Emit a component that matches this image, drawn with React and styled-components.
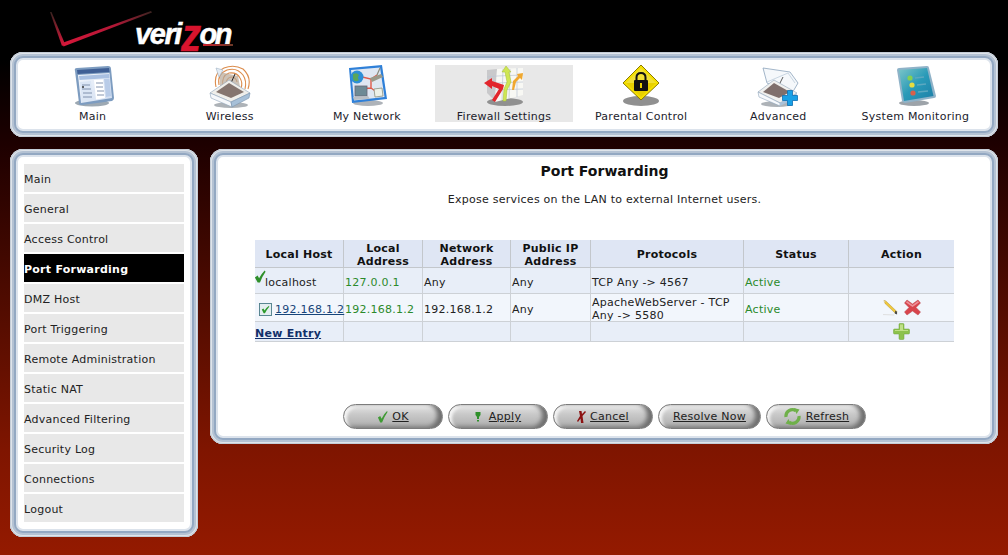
import React from "react";
import styled, { createGlobalStyle } from "styled-components";

const GlobalStyle = createGlobalStyle`
  html, body {
    margin: 0;
    padding: 0;
    height: 555px;
    overflow: hidden;
  }
  body {
    font-family: "DejaVu Sans", Verdana, sans-serif;
    font-size: 11px;
    letter-spacing: 0.25px;
    color: #222;
    background: linear-gradient(to bottom, #000 0px, #000 60px, #1e0000 145px, #5c0e00 340px, #7f1500 450px, #941a00 555px);
  }
`;

const Page = styled.div`
  width: 1008px;
  height: 555px;
  padding: 0 10px;
  box-sizing: border-box;
`;

const Header = styled.div`
  height: 52px;
  position: relative;
`;

const Panel = styled.div`
  background: #fff;
  border-radius: 13px;
  box-sizing: border-box;
  box-shadow: inset 0 0 0 1px #c4ccd6, inset 0 0 0 2px #dfe4ea, inset 0 0 0 4px #b4c2d3,
    inset 0 0 0 6px #93a8c2, inset 0 0 0 8px #dce3ec;
`;

const TopPanel = styled(Panel)`
  height: 85px;
  padding: 13px 14px 0 14px;
  display: flex;
  align-items: flex-start;
`;

const NavItem = styled.div`
  flex: 1;
  height: 57px;
  display: flex;
  flex-direction: column;
  align-items: center;
  background: ${(p) => (p.$active ? "#e8e8e8" : "transparent")};
`;

const NavIcon = styled.svg`
  width: 46px;
  height: 44px;
  display: block;
  flex: none;
`;

const NavLabel = styled.span`
  margin-top: 1px;
  line-height: 14px;
  color: #1c1c2c;
  white-space: nowrap;
`;

const Columns = styled.div`
  display: flex;
  align-items: flex-start;
  gap: 12px;
  margin-top: 12px;
`;

const SidePanel = styled(Panel)`
  width: 188px;
  height: 388px;
  padding: 15px 14px;
  flex: none;
`;

const MenuItem = styled.div`
  height: 28px;
  margin-bottom: 2px;
  line-height: 32px;
  white-space: nowrap;
  background: ${(p) => (p.$active ? "#000" : "#e8e8e8")};
  color: ${(p) => (p.$active ? "#fff" : "#222")};
  font-weight: ${(p) => (p.$active ? "bold" : "normal")};
`;

const MainPanel = styled(Panel)`
  flex: 1;
  height: 295px;
  padding: 14px 44px 0 45px;
  display: flex;
  flex-direction: column;
  align-items: center;
`;

const Title = styled.h1`
  margin: 0;
  font-size: 14px;
  line-height: 17px;
  font-weight: bold;
  letter-spacing: 0;
  color: #111;
`;

const Subtitle = styled.p`
  margin: 13px 0 0;
  line-height: 14px;
  color: #222;
`;

const Table = styled.table`
  width: 699px;
  margin-top: 33px;
  border-collapse: separate;
  border-spacing: 0;
  table-layout: fixed;
`;

const Th = styled.th`
  height: 28px;
  padding: ${(p) => (p.$single ? 8 : 2)}px 2px 0;
  box-sizing: border-box;
  vertical-align: top;
  background: #dfe6f4;
  border-right: 1px solid #c3c7cc;
  border-bottom: 1px solid #c3c7cc;
  font-size: 11px;
  line-height: 13px;
  font-weight: bold;
  color: #111;
  text-align: center;
  &:last-child {
    border-right: 0;
  }
`;

const HeadLines = styled.div`
  height: 24px;
`;

const Td = styled.td`
  height: ${(p) => p.$h}px;
  padding: ${(p) => p.$pt || 0}px 1px 0;
  box-sizing: border-box;
  vertical-align: top;
  background: ${(p) => (p.$light ? "#f2f6fc" : "#e8eef8")};
  border-right: 1px solid #cdd1d6;
  border-bottom: 1px solid #cdd1d6;
  line-height: 12px;
  color: ${(p) => (p.$green ? "#2b8a2b" : "#222")};
  text-align: left;
  white-space: nowrap;
  &:first-child {
    padding-left: 0;
  }
  &:last-child {
    border-right: 0;
  }
`;

const TwoLines = styled.div`
  height: 25px;
  line-height: 13px;
`;

const HostCell = styled.div`
  display: flex;
  align-items: center;
  gap: 3px;
  padding-left: 4px;
  svg {
    flex: none;
  }
`;

const TickHost = styled.div`
  position: relative;
  padding-left: 10px;
`;

const TickOver = styled.svg`
  position: absolute;
  left: -1px;
  top: -7px;
  width: 12px;
  height: 13px;
`;

const HostLink = styled.a`
  color: #17457a;
  text-decoration: underline;
`;

const NewEntry = styled.a`
  color: #12306a;
  font-weight: bold;
  text-decoration: underline;
`;

const ActionIcons = styled.div`
  display: flex;
  justify-content: center;
  gap: 6px;
  align-items: center;
`;

const PlusWrap = styled.div`
  display: flex;
  justify-content: center;
`;

const Buttons = styled.div`
  display: flex;
  gap: 5px;
  margin-top: 62px;
`;

const Button = styled.div`
  width: ${(p) => p.$w || 100}px;
  height: 25px;
  box-sizing: border-box;
  border-radius: 13px;
  border: 1px solid #7c7c7c;
  display: flex;
  align-items: center;
  justify-content: center;
  gap: ${(p) => p.$gap || 4}px;
  background: linear-gradient(to bottom, #e6e6e6 0%, #c9c9c9 40%, #b8b8b8 75%, #a8a8a8 100%);
  box-shadow: inset -5px -1px 4px #707070, inset 3px 2px 3px #f4f4f4;
  color: #222;
  text-decoration: underline;
`;

const Logo = styled.div`
  position: absolute;
  left: 38px;
  top: 8px;
  width: 190px;
  height: 40px;
`;

const LogoCheck = styled.svg`
  position: absolute;
  left: 0;
  top: 0;
  width: 120px;
  height: 40px;
`;

const LogoWord = styled.span`
  position: absolute;
  left: 87px;
  top: 10px;
  font-family: "Liberation Sans", Arial, sans-serif;
  font-size: 29px;
  line-height: 32px;
  font-weight: bold;
  font-style: italic;
  letter-spacing: -1.4px;
  white-space: nowrap;
  color: #fff;
  -webkit-text-stroke: 0.5px #fff;
`;

const LogoZ = styled.span`
  display: inline-block;
  font-size: 40px;
  line-height: 0;
  vertical-align: -5px;
  transform: scaleY(1.14);
  transform-origin: bottom;
  color: #d8142e;
  -webkit-text-stroke: 0.5px #d8142e;
`;

const LogoEnd = styled.span`
  letter-spacing: -2.6px;
`;

const LogoTail = styled.div`
  position: absolute;
  left: 155px;
  top: 36px;
  width: 30px;
  height: 2px;
  background: linear-gradient(to right, #c8202c, #6a3a28);
`;

const MainIcon = () => (
  <NavIcon viewBox="0 0 46 44">
    <defs>
      <linearGradient id="mainScreen" x1="0" y1="0" x2="1" y2="1">
        <stop offset="0" stopColor="#f4f7fc" />
        <stop offset="1" stopColor="#cfdcf0" />
      </linearGradient>
    </defs>
    <ellipse cx="22" cy="38" rx="17" ry="3.5" fill="#5c6f80" opacity="0.6" />
    <path d="M5 6 Q4 3 7 3 L38 1 Q41 1 41 4 L44 33 Q44 35 42 36 L12 40 Q9 40 9 38 Z" fill="#7d9cc0" />
    <path d="M7 5 L39 3 L39.5 7 L7.5 9 Z" fill="#3f5f95" />
    <path d="M8 10 L39.5 8 L42 33 L11 38 Z" fill="url(#mainScreen)" />
    <path d="M9 11 L39 9 L39.5 13 L9.5 15 Z" fill="#a9c0e2" />
    <path d="M10 17 L21 16 L23 35 L12 37 Z" fill="#dbe6f5" />
    <path d="M24 15 L33 14.5 L35 33 L26 34.5 Z" fill="#fff" />
    <path d="M34 14 L39.5 13.5 L41 31 L36 32 Z" fill="#b9cce8" />
    <path d="M12 20 h8 M12 24 h9 M13 28 h9 M13 32 h9 M26 18 h7 M26 22 h7 M27 26 h7 M27 30 h7" stroke="#7688a6" strokeWidth="0.9" />
    <circle cx="13" cy="22" r="1" fill="#333" />
  </NavIcon>
);

const WirelessIcon = () => (
  <NavIcon viewBox="0 0 46 44">
    <ellipse cx="24" cy="40" rx="17" ry="3" fill="#5b6670" opacity="0.5" />
    <g fill="none" stroke="#dc8c4c" strokeWidth="1.1">
      <path d="M9 22 Q6 8 17 3 Q27 -1 36 4 Q45 12 41 24" />
      <path d="M12 20 Q10 9 20 5 Q30 2 36 10 Q40 16 38 24" />
      <path d="M16 21 Q14 11 22 8 Q30 7 33 13 Q36 18 34 23" />
      <path d="M19 20 Q19 13 24 12 Q29 12 30 17" />
    </g>
    <path d="M13 7 L31 11 L34 27 L13 24 Z" fill="#b7a898" opacity="0.7" />
    <path d="M9 3 L16 5 L12 12 Z" fill="#e4ecf4" stroke="#9fb2c4" strokeWidth="0.6" />
    <path d="M24 18 L28 9" stroke="#222" strokeWidth="1" />
    <path d="M3 28 L22 15 L43 28 L24 37 Z" fill="#efeeea" stroke="#8ea5bb" strokeWidth="0.6" />
    <path d="M9 27 L22 18 L37 27 L24 33 Z" fill="#85756f" />
    <path d="M3 28 L24 37 L25 42 L4 33 Z" fill="#f6f8fb" stroke="#8ea5bb" strokeWidth="0.6" />
    <path d="M24 37 L43 28 L42 33 L25 42 Z" fill="#a7c0d8" stroke="#7b94ad" strokeWidth="0.6" />
  </NavIcon>
);

const NetworkIcon = () => (
  <NavIcon viewBox="0 0 46 44">
    <ellipse cx="24" cy="38" rx="15" ry="3" fill="#5d6873" opacity="0.5" />
    <path d="M5 3 L38 0 L43 34 L8 38 Z" fill="#2f80d8" />
    <path d="M7 5 L36 2.5 L40.5 32 L10 35.5 Z" fill="#dfe7f2" />
    <path d="M14 11 L27 14 L27 23 L14 24 L14 30 M27 14 L33 10 M27 23 L34 28" fill="none" stroke="#e05a4a" strokeWidth="1.4" />
    <circle cx="13" cy="12" r="6.5" fill="#2d8fd6" />
    <path d="M9 9 Q13 7 15 10 Q13 13 15 15 Q11 18 9 14 Z" fill="#5aa65a" />
    <path d="M26 13 L37 9 L39 12 L28 17 Z" fill="#9a9a8a" />
    <path d="M33 10 L36 3" stroke="#8a8a7a" strokeWidth="1.2" />
    <rect x="11" y="21" width="12" height="10" fill="#6d8a95" stroke="#667" strokeWidth="0.8" />
    <path d="M9 32 L24 31 L26 34 L10 35 Z" fill="#b9bfc4" />
    <path d="M30 24 L38 23 L39 31 L31 32 Z" fill="#eef1e8" stroke="#8a9080" strokeWidth="0.8" />
  </NavIcon>
);

const FirewallIcon = () => (
  <NavIcon viewBox="0 0 46 44">
    <ellipse cx="24" cy="37" rx="18" ry="4" fill="#6b6b6b" opacity="0.7" />
    <path d="M6 5 L16 4 L14 36 L6 28 Z" fill="#c9c9cb" />
    <path d="M16 4 L42 3 L42 30 L14 37 Z" fill="#f8f8f4" />
    <path d="M22 4 L21 35 M29 4 L28 34 M36 3 L36 32 M16 11 L42 10 M15 18 L42 17 M15 25 L42 24 M6 12 L16 11 M6 19 L15 18" stroke="#bcc5d4" strokeWidth="0.7" />
    <path d="M25 1 L30 7 L28 7 L30 17 L26 25 L25 36 L22 36 L23 24 L26 17 L24 7 L21 7 Z" fill="#cfe654" stroke="#a2bc34" strokeWidth="0.5" />
    <path d="M42 8 L41 15 L39 13 L35 17 L33 25 L31 25 L32 16 L37 11 L36 9 Z" fill="#f0a830" />
    <path d="M3 18 L11 13 L11 16 L23 20 L22 24 L14 37 L11 35 L18 24 L11 21 L11 24 Z" fill="#e2262c" />
  </NavIcon>
);

const ParentalIcon = () => (
  <NavIcon viewBox="0 0 46 44">
    <ellipse cx="23" cy="36" rx="18" ry="5" fill="#555" opacity="0.65" />
    <path d="M23 0 L41 18 L23 35 L5 18 Z" fill="#f5e000" stroke="#8a7a00" strokeWidth="1" strokeLinejoin="round" />
    <path d="M23 3 L38 18 L23 32 L8 18 Z" fill="#e8d000" />
    <path d="M23 3 L38 18 L8 18 Z" fill="#faf06a" opacity="0.5" />
    <path d="M18.5 16 L18.5 12.5 Q18.5 8 23 8 Q27.5 8 27.5 12.5 L27.5 16" fill="none" stroke="#111" strokeWidth="2" />
    <rect x="16" y="15" width="14" height="11" rx="1" fill="#111" />
    <rect x="22" y="18" width="2" height="5" fill="#e8d000" />
  </NavIcon>
);

const AdvancedIcon = () => (
  <NavIcon viewBox="0 0 46 44">
    <ellipse cx="22" cy="39" rx="16" ry="3" fill="#5b6670" opacity="0.5" />
    <path d="M8 3 L35 7 L43 18 L36 30 L12 18 Z" fill="#f5f8fb" stroke="#8ba3bb" strokeWidth="0.8" />
    <path d="M12 17 L33 8 L40 18" fill="none" stroke="#c9d6e2" strokeWidth="1" />
    <path d="M24 20 L28 12" stroke="#333" strokeWidth="0.8" />
    <path d="M3 27 L19 15 L42 28 L25 38 Z" fill="#f0f0ee" stroke="#8ea5bb" strokeWidth="0.6" />
    <path d="M8 27 L19 18 L35 27 L24 33 Z" fill="#7f6f6c" />
    <path d="M3 27 L25 38 L25 41 L4 32 Z" fill="#f7f9fc" stroke="#8ea5bb" strokeWidth="0.6" />
    <path d="M25 38 L42 28 L41 33 L25 41 Z" fill="#a9c2da" />
    <path d="M32.5 25.5 h5 v5 h5 v5 h-5 v5 h-5 v-5 h-5 v-5 h5 Z" fill="#18a0e6" stroke="#0c70b4" strokeWidth="0.8" />
  </NavIcon>
);

const MonitorIcon = () => (
  <NavIcon viewBox="0 0 46 44">
    <defs>
      <linearGradient id="monitorScreen" x1="0" y1="0" x2="1" y2="1">
        <stop offset="0" stopColor="#7cc6c8" />
        <stop offset="0.5" stopColor="#2a9ab8" />
        <stop offset="1" stopColor="#1c7fa8" />
      </linearGradient>
    </defs>
    <ellipse cx="22" cy="38" rx="15" ry="3" fill="#5b6670" opacity="0.6" />
    <path d="M5 5 Q5 3 7 3 L35 1 Q37 1 37 3 L44 31 Q44 33 42 33 L13 38 Q11 38 10 36 Z" fill="#8fb2c8" />
    <path d="M7 5 L35 3 L41.5 31 L12 36 Z" fill="url(#monitorScreen)" />
    <circle cx="18" cy="13" r="2.6" fill="#86d050" />
    <circle cx="20" cy="20" r="2.6" fill="#e8dc40" />
    <circle cx="21" cy="28" r="2.6" fill="#d8604a" />
    <path d="M23 13 L32 12 M25 20 L34 19 M26 27 L36 26" stroke="#5ca8c0" strokeWidth="1.4" />
  </NavIcon>
);

const Check = ({ w = 11, h = 13, color = "#2f9a2a" }) => (
  <svg width={w} height={h} viewBox="0 0 12 14">
    <path d="M1 8 L3.5 6.5 L5 9.5 Q7.5 4 11 1 L11.5 2 Q8 7 5.5 13.5 L3.5 13.5 Z" fill={color} />
  </svg>
);

const CheckBoxIcon = () => (
  <svg width="13" height="13" viewBox="0 0 14 14">
    <rect x="0.5" y="0.5" width="13" height="13" fill="#e4eef0" stroke="#4f7f8a" />
    <path d="M3 7 L4.8 5.8 L6 8 Q8 5 10.8 3 L11 4 Q8.5 7 6.4 11 L5 11 Z" fill="#2c9a2c" />
  </svg>
);

const PencilIcon = () => (
  <svg width="15" height="17" viewBox="0 0 16 17">
    <path d="M1 1 L3 1.5 L15 13 L13.5 15 L2 4 Z" fill="#f0c83c" stroke="#b09028" strokeWidth="0.5" />
    <path d="M13 12 L15 13 L15 16 L12.5 15 Z" fill="#4a4a4a" />
    <path d="M0 16 L12 16.5" stroke="#dddddd" strokeWidth="1" />
    <path d="M1 1 L2.5 2 L2 4 Z" fill="#e8dcc4" />
  </svg>
);

const CrossIcon = () => (
  <svg width="17" height="17" viewBox="0 0 17 17">
    <path d="M3 1 L8.5 5 L14 1 L16.5 4 L12 8.5 L16.5 13 L14 16 L8.5 12 L3 16 L0.5 13 L5 8.5 L0.5 4 Z" fill="#d8444c" stroke="#b84a50" strokeWidth="0.5" strokeLinejoin="round" />
    <path d="M3 2 L8.5 6 L14 2 L15 3.5 L8.5 8 L2 3.5 Z" fill="#ee9098" />
  </svg>
);

const PlusIcon = () => (
  <svg width="17" height="17" viewBox="0 0 17 17">
    <path d="M6 1 Q6 0.5 7 0.5 L10 0.5 Q11 0.5 11 1.5 L11 6 L15.5 6 Q16.5 6 16.5 7 L16.5 10 Q16.5 11 15.5 11 L11 11 L11 15.5 Q11 16.5 10 16.5 L7 16.5 Q6 16.5 6 15.5 L6 11 L1.5 11 Q0.5 11 0.5 10 L0.5 7 Q0.5 6 1.5 6 L6 6 Z" fill="#8cc24c" stroke="#6fa238" strokeWidth="0.5" />
    <path d="M7 1.5 L10 1.5 L10 7 L15 7 L15 8 L2 8 L2 7 L7 7 Z" fill="#bfe088" />
  </svg>
);

const ApplyIcon = () => (
  <svg width="6" height="10" viewBox="0 0 6 10">
    <path d="M0.5 0 L5.5 0 L5.5 3 L4 5 L4 7 L2 7 L2 5 L0.5 3 Z M2 8 L4 8 L4 9.5 L2 9.5 Z" fill="#2f8f2a" />
  </svg>
);

const CancelIcon = () => (
  <svg width="9" height="12" viewBox="0 0 9 12">
    <path d="M2 0 L4.5 0 L5 3 L8 0 L9 1 L5.5 5 L6.5 12 L4 12 L3.5 7.5 L1 11 L0 10 L3 5 Z" fill="#8c1212" />
  </svg>
);

const RefreshIcon = () => (
  <svg width="19" height="19" viewBox="0 0 19 19">
    <g fill="none" stroke="#6fb04a" strokeWidth="3.2">
      <path d="M3 10 A6.5 6.5 0 0 1 13 3.8" />
      <path d="M16 9 A6.5 6.5 0 0 1 6 15.2" />
    </g>
    <path d="M11 1 L16.5 2.5 L13.5 7 Z M8 18 L2.5 16.5 L5.5 12 Z" fill="#6fb04a" />
  </svg>
);

const navItems = [
  { label: "Main", Icon: MainIcon },
  { label: "Wireless", Icon: WirelessIcon },
  { label: "My Network", Icon: NetworkIcon },
  { label: "Firewall Settings", Icon: FirewallIcon, active: true },
  { label: "Parental Control", Icon: ParentalIcon },
  { label: "Advanced", Icon: AdvancedIcon },
  { label: "System Monitoring", Icon: MonitorIcon },
];

const menuItems = [
  "Main",
  "General",
  "Access Control",
  "Port Forwarding",
  "DMZ Host",
  "Port Triggering",
  "Remote Administration",
  "Static NAT",
  "Advanced Filtering",
  "Security Log",
  "Connections",
  "Logout",
];

const columnWidths = [89, 79, 88, 80, 153, 105, 105];

const App = () => (
  <Page>
    <GlobalStyle />
    <Header>
      <Logo>
        <LogoCheck viewBox="0 0 120 40">
          <defs>
            <linearGradient id="checkFade" x1="0" y1="0" x2="1" y2="0">
              <stop offset="0" stopColor="#d8173a" />
              <stop offset="0.6" stopColor="#b01836" />
              <stop offset="1" stopColor="#3a2420" />
            </linearGradient>
            <linearGradient id="checkLeft" x1="0" y1="0" x2="0" y2="1">
              <stop offset="0" stopColor="#3a2420" />
              <stop offset="1" stopColor="#d8173a" />
            </linearGradient>
          </defs>
          <path d="M14 35 L103 3 L104 4.5 L15.5 38.5 Z" fill="url(#checkFade)" />
          <path d="M2 4 L3.5 4 L17 36 L14 38 Z" fill="url(#checkLeft)" />
        </LogoCheck>
        <LogoWord>
          veri<LogoZ>z</LogoZ><LogoEnd>on</LogoEnd>
        </LogoWord>
        <LogoTail />
      </Logo>
    </Header>

    <TopPanel>
      {navItems.map(({ label, Icon, active }) => (
        <NavItem key={label} $active={active}>
          <Icon />
          <NavLabel>{label}</NavLabel>
        </NavItem>
      ))}
    </TopPanel>

    <Columns>
      <SidePanel>
        {menuItems.map((item) => (
          <MenuItem key={item} $active={item === "Port Forwarding"}>
            {item}
          </MenuItem>
        ))}
      </SidePanel>

      <MainPanel>
        <Title>Port Forwarding</Title>
        <Subtitle>Expose services on the LAN to external Internet users.</Subtitle>

        <Table>
          <colgroup>
            {columnWidths.map((w, i) => (
              <col key={i} width={w} />
            ))}
          </colgroup>
          <thead>
            <tr>
              <Th $single>Local Host</Th>
              <Th><HeadLines>Local<br />Address</HeadLines></Th>
              <Th><HeadLines>Network<br />Address</HeadLines></Th>
              <Th><HeadLines>Public IP<br />Address</HeadLines></Th>
              <Th $single>Protocols</Th>
              <Th $single>Status</Th>
              <Th $single>Action</Th>
            </tr>
          </thead>
          <tbody>
            <tr>
              <Td $h={26} $pt={9}>
                <TickHost>
                  <TickOver viewBox="0 0 12 14">
                    <path d="M0.5 8 L3.5 6 L5 9 Q7.5 4 11 0.5 L12 2 Q8.5 7 6 13.5 L3.5 13.5 Z" fill="#2f8f2a" />
                  </TickOver>
                  localhost
                </TickHost>
              </Td>
              <Td $h={26} $pt={9} $green>127.0.0.1</Td>
              <Td $h={26} $pt={9}>Any</Td>
              <Td $h={26} $pt={9}>Any</Td>
              <Td $h={26} $pt={9}>TCP Any -&gt; 4567</Td>
              <Td $h={26} $pt={9} $green>Active</Td>
              <Td $h={26} />
            </tr>
            <tr>
              <Td $h={28} $pt={9} $light>
                <HostCell>
                  <CheckBoxIcon />
                  <HostLink>192.168.1.2</HostLink>
                </HostCell>
              </Td>
              <Td $h={28} $pt={10} $light $green>192.168.1.2</Td>
              <Td $h={28} $pt={10} $light>192.168.1.2</Td>
              <Td $h={28} $pt={10} $light>Any</Td>
              <Td $h={28} $pt={2} $light><TwoLines>ApacheWebServer - TCP<br />Any -&gt; 5580</TwoLines></Td>
              <Td $h={28} $pt={10} $light $green>Active</Td>
              <Td $h={28} $pt={5} $light>
                <ActionIcons>
                  <PencilIcon />
                  <CrossIcon />
                </ActionIcons>
              </Td>
            </tr>
            <tr>
              <Td $h={20} $pt={6}><NewEntry>New Entry</NewEntry></Td>
              <Td $h={20} />
              <Td $h={20} />
              <Td $h={20} />
              <Td $h={20} />
              <Td $h={20} />
              <Td $h={20} $pt={1}><PlusWrap><PlusIcon /></PlusWrap></Td>
            </tr>
          </tbody>
        </Table>

        <Buttons>
          <Button><Check w={11} h={13} color="#3f9a34" /><span>OK</span></Button>
          <Button $gap={8}><ApplyIcon /><span>Apply</span></Button>
          <Button><CancelIcon /><span>Cancel</span></Button>
          <Button $w={103}><span>Resolve Now</span></Button>
          <Button><RefreshIcon /><span>Refresh</span></Button>
        </Buttons>
      </MainPanel>
    </Columns>
  </Page>
);

export default App;
